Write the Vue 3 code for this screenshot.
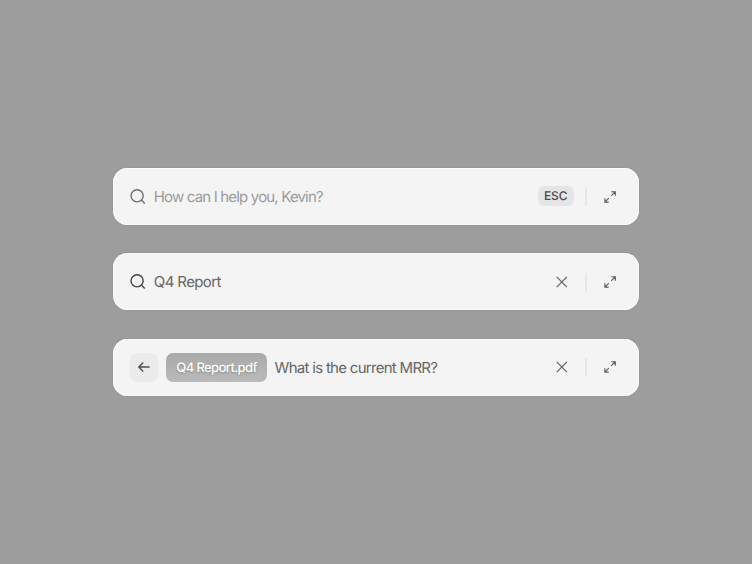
<template>
  <main class="stage">
    <div v-for="bar in bars" :key="bar.id" class="search-bar">
      <button v-if="bar.file" class="back" aria-label="Back">
        <svg width="14" height="14" viewBox="0 0 14 14">
          <path d="M12.6 7H2.1M6.2 2.6L1.8 7L6.2 11.4" />
        </svg>
      </button>
      <svg v-else class="search-icon" :class="{ active: !bar.placeholder }" width="16" height="16" viewBox="0 0 16 16">
        <circle cx="7.1" cy="6.8" r="6.1" />
        <path d="M11.4 11.1L14.8 14.5" />
      </svg>

      <span v-if="bar.file" class="file">{{ bar.file }}</span>
      <span class="query" :class="[bar.id, { placeholder: bar.placeholder }]">{{ bar.text }}</span>

      <span v-if="bar.placeholder" class="key">ESC</span>
      <button v-else class="clear" aria-label="Clear">
        <svg width="12" height="12" viewBox="0 0 12 12">
          <path d="M0.7 0.9L10.9 11.1M10.9 0.9L0.7 11.1" />
        </svg>
      </button>
      <span class="divider"></span>
      <button class="expand" aria-label="Expand">
        <svg width="12" height="12" viewBox="0 0 12 12">
          <path d="M7.3 0.7H11.3V4.7M11.3 0.7L7.2 4.8M4.7 11.1H0.9V7.3M0.9 11.1L4.8 7.2" />
        </svg>
      </button>
    </div>
  </main>
</template>

<script setup>
const bars = [
  { id: 'empty', text: 'How can I help you, Kevin?', placeholder: true },
  { id: 'search', text: 'Q4 Report' },
  { id: 'question', text: 'What is the current MRR?', file: 'Q4 Report.pdf' },
];
</script>

<style>
body {
  margin: 0;
  background: #9d9d9d;
}
</style>

<style scoped>
.stage {
  box-sizing: border-box;
  height: 564px;
  padding-bottom: 0.1px;
  display: flex;
  flex-direction: column;
  align-items: center;
  justify-content: center;
  gap: 28.4px;
  background: #9d9d9d;
  font-family: Inter, "Liberation Sans", sans-serif;
  text-rendering: geometricPrecision;
}

.search-bar {
  box-sizing: border-box;
  width: 525.4px;
  height: 57px;
  padding: 0 22.5px 0 16.5px;
  display: flex;
  align-items: center;
  border-radius: 14.5px;
  background: #f4f4f4;
  box-shadow: inset 0 0 0 1px #fafafa, 0 0 2px rgba(0, 0, 0, 0.12);
}

svg {
  display: block;
  fill: none;
  stroke: currentColor;
  stroke-width: 1.15;
}

button {
  flex: none;
  display: flex;
  align-items: center;
  justify-content: center;
  padding: 0;
  border: none;
  background: none;
  color: #5c5c5c;
  cursor: pointer;
}

.search-icon {
  flex: none;
  margin-right: 8px;
  color: #707070;
  stroke-width: 1.4;
}

.search-icon.active {
  color: #444;
}

.query {
  flex: 1;
  padding-top: 0.4px;
  font-size: 15px;
  line-height: 20px;
  white-space: nowrap;
  color: #666;
}

.query.empty {
  letter-spacing: -0.83px;
}

.query.search {
  letter-spacing: -0.62px;
}

.query.question {
  letter-spacing: -0.71px;
}

.query.placeholder {
  color: #9b9b9b;
}

.back {
  width: 28.5px;
  height: 28.5px;
  margin-right: 8px;
  border-radius: 7px;
  background: #ebebeb;
  color: #505050;
}

.back svg {
  stroke-width: 1.4;
}

.file {
  box-sizing: border-box;
  flex: none;
  width: 100.5px;
  height: 28.5px;
  margin-right: 7.8px;
  border-radius: 7px;
  background: linear-gradient(#a9a9a9, #bababa);
  color: #fff;
  font-size: 13px;
  font-weight: 500;
  line-height: 30px;
  letter-spacing: -0.6px;
  text-align: center;
  text-shadow: 0 1px 2px rgba(0, 0, 0, 0.25);
}

.key {
  flex: none;
  width: 36px;
  height: 20px;
  margin: 0 11.5px 1px 0;
  border-radius: 6px;
  background: #e5e5e5;
  color: #4a4a4a;
  font-size: 12px;
  font-weight: 500;
  line-height: 20px;
  letter-spacing: -0.2px;
  text-align: center;
}

.clear {
  margin-right: 17.5px;
}

.divider {
  flex: none;
  width: 1.5px;
  height: 18px;
  margin-right: 17.5px;
  background: #e7e7e7;
}
</style>
